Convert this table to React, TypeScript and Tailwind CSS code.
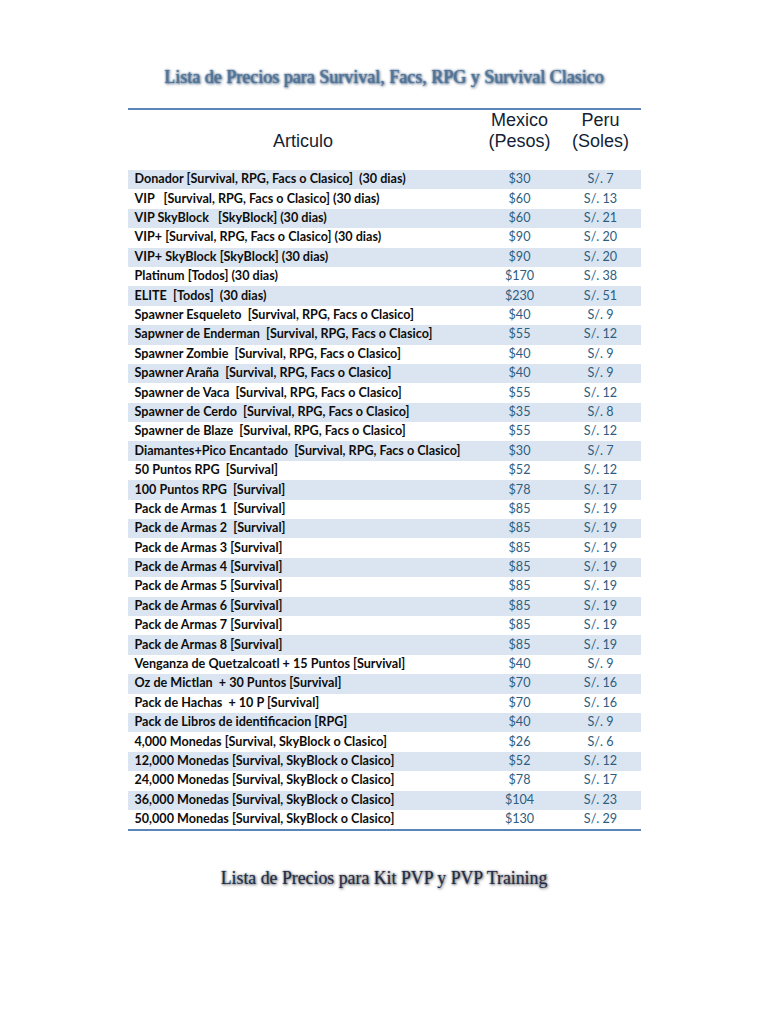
import React from "react";

const rows: [string, string, string][] = [
  ["Donador [Survival, RPG, Facs o Clasico]  (30 dias)", "$30", "S/. 7"],
  ["VIP   [Survival, RPG, Facs o Clasico] (30 dias)", "$60", "S/. 13"],
  ["VIP SkyBlock   [SkyBlock] (30 dias)", "$60", "S/. 21"],
  ["VIP+ [Survival, RPG, Facs o Clasico] (30 dias)", "$90", "S/. 20"],
  ["VIP+ SkyBlock [SkyBlock] (30 dias)", "$90", "S/. 20"],
  ["Platinum [Todos] (30 dias)", "$170", "S/. 38"],
  ["ELITE  [Todos]  (30 dias)", "$230", "S/. 51"],
  ["Spawner Esqueleto  [Survival, RPG, Facs o Clasico]", "$40", "S/. 9"],
  ["Sapwner de Enderman  [Survival, RPG, Facs o Clasico]", "$55", "S/. 12"],
  ["Spawner Zombie  [Survival, RPG, Facs o Clasico]", "$40", "S/. 9"],
  ["Spawner Araña  [Survival, RPG, Facs o Clasico]", "$40", "S/. 9"],
  ["Spawner de Vaca  [Survival, RPG, Facs o Clasico]", "$55", "S/. 12"],
  ["Spawner de Cerdo  [Survival, RPG, Facs o Clasico]", "$35", "S/. 8"],
  ["Spawner de Blaze  [Survival, RPG, Facs o Clasico]", "$55", "S/. 12"],
  ["Diamantes+Pico Encantado  [Survival, RPG, Facs o Clasico]", "$30", "S/. 7"],
  ["50 Puntos RPG  [Survival]", "$52", "S/. 12"],
  ["100 Puntos RPG  [Survival]", "$78", "S/. 17"],
  ["Pack de Armas 1  [Survival]", "$85", "S/. 19"],
  ["Pack de Armas 2  [Survival]", "$85", "S/. 19"],
  ["Pack de Armas 3 [Survival]", "$85", "S/. 19"],
  ["Pack de Armas 4 [Survival]", "$85", "S/. 19"],
  ["Pack de Armas 5 [Survival]", "$85", "S/. 19"],
  ["Pack de Armas 6 [Survival]", "$85", "S/. 19"],
  ["Pack de Armas 7 [Survival]", "$85", "S/. 19"],
  ["Pack de Armas 8 [Survival]", "$85", "S/. 19"],
  ["Venganza de Quetzalcoatl + 15 Puntos [Survival]", "$40", "S/. 9"],
  ["Oz de Mictlan  + 30 Puntos [Survival]", "$70", "S/. 16"],
  ["Pack de Hachas  + 10 P [Survival]", "$70", "S/. 16"],
  ["Pack de Libros de identificacion [RPG]", "$40", "S/. 9"],
  ["4,000 Monedas [Survival, SkyBlock o Clasico]", "$26", "S/. 6"],
  ["12,000 Monedas [Survival, SkyBlock o Clasico]", "$52", "S/. 12"],
  ["24,000 Monedas [Survival, SkyBlock o Clasico]", "$78", "S/. 17"],
  ["36,000 Monedas [Survival, SkyBlock o Clasico]", "$104", "S/. 23"],
  ["50,000 Monedas [Survival, SkyBlock o Clasico]", "$130", "S/. 29"],
];

export default function App() {
  return (
    <div className="w-[768px] h-[1024px] bg-white flex flex-col items-center">
      <h1 className="mt-[65px] text-[18px] leading-[24px] text-[#4f769e] [font-family:'Liberation_Serif',serif] [text-shadow:0_0_2px_rgba(23,54,93,0.9),1px_1px_3px_rgba(23,54,93,0.8)]">
        Lista de Precios para Survival, Facs, RPG y Survival Clasico
      </h1>
      <div className="mt-[19px] w-[513px] border-t-2 border-b-2 border-[#5b85b8]">
        <div className="flex h-[60px] pb-[18px] items-end text-[#141f36] text-[18px] leading-[21px] [font-family:'Liberation_Sans',Arial,sans-serif]">
          <div className="w-[351px] text-center">Articulo</div>
          <div className="w-[82px] text-center">
            Mexico
            <br />
            (Pesos)
          </div>
          <div className="w-[80px] text-center">
            Peru
            <br />
            (Soles)
          </div>
        </div>
        {rows.map(([name, mx, pe], i) => (
          <div
            key={i}
            className={`flex items-center h-[19.4px] text-[12.6px] [font-family:'Lato',sans-serif] ${
              i % 2 === 0 ? "bg-[#dbe5f1]" : "bg-white"
            }`}
          >
            <div className="w-[351px] pl-[7px] font-bold text-[#0d0d0d] whitespace-pre">{name}</div>
            <div className="w-[82px] text-center text-[#2d5d7f]">{mx}</div>
            <div className="w-[80px] text-center text-[#2d5d7f]">{pe}</div>
          </div>
        ))}
      </div>
      <h2 className="mt-[36px] text-[17.8px] leading-[22px] text-[#1f2d4a] [font-family:'Liberation_Serif',serif] [text-shadow:0_0_2px_rgba(80,80,80,0.8),1px_1px_3px_rgba(80,80,80,0.8)]">
        Lista de Precios para Kit PVP y PVP Training
      </h2>
    </div>
  );
}
